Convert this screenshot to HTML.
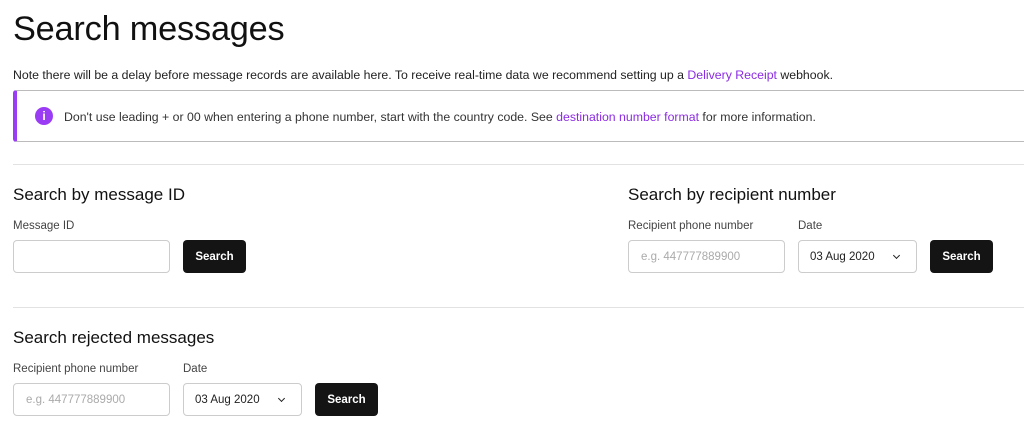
<!DOCTYPE html>
<html><head><style>
body{margin:0;width:1024px;height:429px;background:#fff;font-family:"Liberation Sans",sans-serif;color:#111;position:relative;overflow:hidden}
.a{position:absolute;white-space:nowrap}
.h1{font-size:34.3px;top:10px;left:13px;letter-spacing:-0.2px}
.note{font-size:12.3px;top:68px;left:13px;color:#222}
a{color:#8b2be2;text-decoration:none}
.alert{position:absolute;left:13px;top:90px;width:1020px;height:52px;border:1px solid #bbb;border-left:4px solid #9b3cf5;border-radius:3px;box-sizing:border-box}
.ic{position:absolute;left:18px;top:16px;width:18px;height:18px;border-radius:50%;background:#9b3cf5;color:#fff;font-weight:bold;font-size:12px;text-align:center;line-height:18px}
.at{position:absolute;left:47px;top:19px;font-size:12.3px;color:#333;white-space:nowrap}
.hr{position:absolute;left:13px;width:1011px;height:1px;background:#e2e2e2}
.h2{font-size:17px;color:#111}
.lbl{font-size:11.5px;color:#444}
.in{position:absolute;height:33px;border:1px solid #ccc;border-radius:4px;box-sizing:border-box;font-size:11.5px;color:#aaa;line-height:33px;padding-left:12px}
.sel{color:#222;padding-left:11px}
.sel:after{content:"";position:absolute;right:17px;top:12px;width:4px;height:4px;border-right:1.5px solid #222;border-bottom:1.5px solid #222;transform:rotate(45deg)}
.btn{position:absolute;width:63px;height:33px;background:#141414;color:#fff;border-radius:4px;font-size:11.5px;font-weight:bold;text-align:center;line-height:35px}
</style></head><body>
<div class="a h1">Search messages</div>
<div class="a note">Note there will be a delay before message records are available here. To receive real-time data we recommend setting up a <a>Delivery Receipt</a> webhook.</div>
<div class="alert"><div class="ic">i</div><div class="at">Don't use leading + or 00 when entering a phone number, start with the country code. See <a>destination number format</a> for more information.</div></div>
<div class="hr" style="top:164px"></div>
<div class="a h2" style="left:13px;top:185px">Search by message ID</div>
<div class="a lbl" style="left:13px;top:220px">Message ID</div>
<div class="in" style="left:13px;top:240px;width:157px"></div>
<div class="btn" style="left:183px;top:240px">Search</div>
<div class="a h2" style="left:628px;top:185px">Search by recipient number</div>
<div class="a lbl" style="left:628px;top:220px">Recipient phone number</div>
<div class="a lbl" style="left:798px;top:220px">Date</div>
<div class="in" style="left:628px;top:240px;width:157px">e.g. 447777889900</div>
<div class="in sel" style="left:798px;top:240px;width:119px">03 Aug 2020</div>
<div class="btn" style="left:930px;top:240px">Search</div>
<div class="hr" style="top:307px"></div>
<div class="a h2" style="left:13px;top:328px">Search rejected messages</div>
<div class="a lbl" style="left:13px;top:363px">Recipient phone number</div>
<div class="a lbl" style="left:183px;top:363px">Date</div>
<div class="in" style="left:13px;top:383px;width:157px">e.g. 447777889900</div>
<div class="in sel" style="left:183px;top:383px;width:119px">03 Aug 2020</div>
<div class="btn" style="left:315px;top:383px">Search</div>
</body></html>
